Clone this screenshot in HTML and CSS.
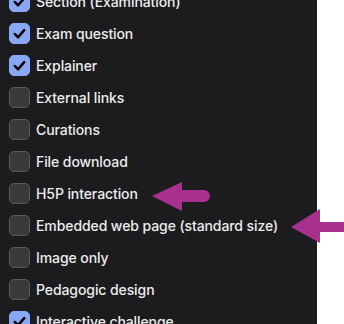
FILE: index.html
```html
<!DOCTYPE html>
<html lang="en">
<head>
  <meta charset="UTF-8" />
  <title>Content types</title>
  <link rel="stylesheet" href="styles.css">
</head>
<body>
  <div class="panel">
    <ul class="options">
      <li class="option"><span class="box checked"><svg viewBox="0 0 20 20"><path d="M5 10.5l3.5 3.5 6.5-7.5"/></svg></span>Section (Examination)</li>
      <li class="option"><span class="box checked"><svg viewBox="0 0 20 20"><path d="M5 10.5l3.5 3.5 6.5-7.5"/></svg></span>Exam question</li>
      <li class="option"><span class="box checked"><svg viewBox="0 0 20 20"><path d="M5 10.5l3.5 3.5 6.5-7.5"/></svg></span>Explainer</li>
      <li class="option"><span class="box"></span>External links</li>
      <li class="option"><span class="box"></span>Curations</li>
      <li class="option"><span class="box"></span>File download</li>
      <li class="option"><span class="box"></span>H5P interaction</li>
      <li class="option"><span class="box"></span>Embedded web page (standard size)</li>
      <li class="option"><span class="box"></span>Image only</li>
      <li class="option"><span class="box"></span>Pedagogic design</li>
      <li class="option"><span class="box checked"><svg viewBox="0 0 20 20"><path d="M5 10.5l3.5 3.5 6.5-7.5"/></svg></span>Interactive challenge</li>
    </ul>
  </div>

  <!-- annotation arrows -->
  <svg class="arrow arrow-h5p" width="60" height="30" viewBox="0 0 60 30">
    <path d="M0 14 L30 0 L30 8 L52 8 A6 6 0 0 1 52 20 L30 20 L30 29 Z"/>
  </svg>
  <svg class="arrow arrow-embed" width="54" height="34" viewBox="0 0 54 34">
    <path d="M0 18 L29 0 L29 13 L54 13 L54 23 L29 23 L29 34 Z"/>
  </svg>
</body>
</html>
```

FILE: styles.css
```css
body {
  margin: 0;
  background: #ffffff;
  font-family: Inter, 'Noto Sans', sans-serif;
  overflow: hidden;
  position: relative;
  height: 324px;
}

.panel {
  width: 317px;
  height: 324px;
  background: #1c1c1e;
  overflow: hidden;
}

.options {
  list-style: none;
  margin: -15px 0 0;
  padding: 0;
}

.option {
  display: flex;
  align-items: center;
  gap: 6px;
  height: 32px;
  padding-left: 9px;
  font-size: 14px;
  font-weight: 500;
  letter-spacing: -0.09px;
  color: #ececed;
}

.box {
  box-sizing: border-box;
  width: 21px;
  height: 21px;
  border: 1px solid #58585c;
  border-radius: 5px;
  background: #3a3a3d;
  display: flex;
  flex-shrink: 0;
}

.box.checked {
  background: #89a7f5;
  border-color: #89a7f5;
}

.box svg {
  width: 100%;
  height: 100%;
  fill: none;
  stroke: #000000;
  stroke-width: 2.6;
  stroke-linecap: round;
  stroke-linejoin: round;
}

.arrow {
  position: absolute;
}

.arrow path {
  fill: #a8318f;
}

.arrow-h5p {
  left: 152px;
  top: 182px;
}

.arrow-embed {
  left: 291px;
  top: 209px;
}
```
